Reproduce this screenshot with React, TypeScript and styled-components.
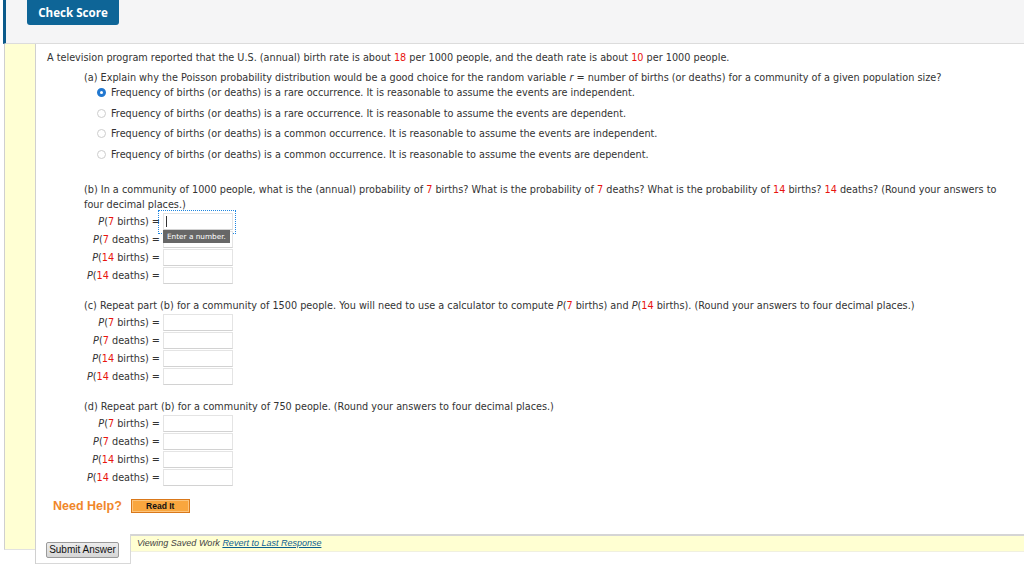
import React from "react";
import styled, { createGlobalStyle } from "styled-components";

const GlobalStyle = createGlobalStyle`
  html, body {
    margin: 0;
    padding: 0;
    background: #fff;
  }
  body {
    font-family: "DejaVu Sans", Verdana, sans-serif;
    font-size: 9.7px;
    color: #333;
  }
`;

const TopBar = styled.div`
  height: 43px;
  margin-left: 3px;
  padding-left: 21px;
  border-left: 3px solid #0b5a8a;
  border-bottom: 1px solid #dcdcdc;
  background: #f5f5f6;
`;

const CheckScore = styled.button`
  width: 92px;
  height: 25px;
  padding: 0;
  border: none;
  border-radius: 0 0 3px 3px;
  background: #0e6597;
  color: #fff;
  font-family: "Open Sans", sans-serif;
  font-weight: 700;
  font-size: 11.6px;
`;

const Main = styled.div`
  display: flex;
  margin-left: 4px;
`;

const NumberColumn = styled.div`
  width: 30px;
  margin-bottom: 14px;
  background: #ffffd3;
  border-left: 1px solid #cfcfcf;
  border-bottom: 1px solid #e2e2e2;
`;

const Content = styled.div`
  flex: 1;
  display: flex;
  flex-direction: column;
  border-left: 1px solid #d0d0d0;
`;

const Body = styled.div`
  padding: 6px 10px 0 11px;
  line-height: 15px;
`;

const Paragraph = styled.div`
  margin-bottom: 5px;
`;

const Part = styled.div`
  margin-left: 37px;
  margin-bottom: ${(p: { gap?: number }) => p.gap ?? 14}px;
`;

const Red = styled.span`
  color: #e8140f;
`;

const Options = styled.div`
  display: flex;
  flex-direction: column;
  gap: 5.5px;
  margin-left: 13px;
`;

const Option = styled.label`
  display: flex;
  align-items: center;
  gap: 5px;
`;

const Radio = styled.span<{ checked?: boolean }>`
  box-sizing: border-box;
  width: 9px;
  height: 9px;
  border-radius: 50%;
  background: #fff;
  border: ${(p) => (p.checked ? "3px solid #2278d0" : "1px solid #cdcdcd")};
`;

const AnswerGrid = styled.div`
  display: grid;
  grid-template-columns: 76px 70px;
  column-gap: 3px;
  row-gap: 1px;
  margin-top: 1px;
  align-items: center;
`;

const Label = styled.span`
  text-align: right;
  white-space: nowrap;
`;

const InputBox = styled.div`
  position: relative;
  box-sizing: border-box;
  width: 70px;
  height: 17px;
  background: #fff;
  border: 1px solid #e4e4e4;
  border-bottom-color: #d2d2d2;
`;

const FocusRing = styled.span`
  position: absolute;
  top: -4px;
  left: -6px;
  right: -4px;
  bottom: -5px;
  border: 1px dotted #1f86e0;
  pointer-events: none;
`;

const Caret = styled.span`
  position: absolute;
  left: 2px;
  top: 2px;
  width: 1px;
  height: 11px;
  background: #333;
`;

const Tooltip = styled.span`
  position: absolute;
  top: 16px;
  left: -1px;
  z-index: 2;
  padding: 0 4px;
  height: 13px;
  line-height: 13px;
  background: #676767;
  color: #fff;
  font-size: 7.3px;
  white-space: nowrap;
`;

const HelpRow = styled.div`
  display: flex;
  align-items: center;
  gap: 9px;
  margin: 13px 0 0 6px;
`;

const NeedHelp = styled.span`
  font-family: "Liberation Sans", Arial, sans-serif;
  font-weight: 700;
  font-size: 12.5px;
  color: #f0872a;
`;

const ReadIt = styled.button`
  width: 59px;
  height: 14px;
  padding: 0;
  background: #f9a63e;
  border: 1px solid #d9781a;
  box-shadow: inset 0 0 0 1px #fcc47c;
  font-family: "Liberation Sans", Arial, sans-serif;
  font-weight: 700;
  font-size: 8.5px;
  color: #111;
`;

const Footer = styled.div`
  display: flex;
  align-items: flex-start;
  margin-top: 20px;
`;

const SubmitCell = styled.div`
  box-sizing: border-box;
  width: 95px;
  height: 30px;
  padding: 8px 0 0 10px;
  border-right: 1px solid #d8d8d8;
  border-bottom: 1px solid #d8d8d8;
`;

const SubmitButton = styled.button`
  width: 73px;
  height: 16px;
  padding: 0;
  border: 1px solid #9a9a9a;
  border-radius: 2px;
  background: linear-gradient(#ececec, #d6d6d6);
  font-family: "Liberation Sans", Arial, sans-serif;
  font-size: 10px;
  color: #111;
`;

const SavedBar = styled.div`
  flex: 1;
  height: 15px;
  padding-left: 6px;
  line-height: 15px;
  background: #ffffd2;
  border-top: 2px solid #d5d5d5;
  border-bottom: 1px solid #f0f0e0;
  font-family: "Liberation Sans", Arial, sans-serif;
  font-style: italic;
  font-size: 9px;
  color: #444;
`;

const RevertLink = styled.a`
  color: #0b5e91;
  text-decoration: underline;
`;

type Row = { n: string; kind: string };

const rows: Row[] = [
  { n: "7", kind: "births" },
  { n: "7", kind: "deaths" },
  { n: "14", kind: "births" },
  { n: "14", kind: "deaths" },
];

const options = [
  "Frequency of births (or deaths) is a rare occurrence. It is reasonable to assume the events are independent.",
  "Frequency of births (or deaths) is a rare occurrence. It is reasonable to assume the events are dependent.",
  "Frequency of births (or deaths) is a common occurrence. It is reasonable to assume the events are independent.",
  "Frequency of births (or deaths) is a common occurrence. It is reasonable to assume the events are dependent.",
];

function Answers({ focused }: { focused?: boolean }) {
  return (
    <AnswerGrid>
      {rows.map((r, i) => (
        <React.Fragment key={r.n + r.kind}>
          <Label>
            <i>P</i>(<Red>{r.n}</Red> {r.kind}) =
          </Label>
          <InputBox>
            {focused && i === 0 && (
              <>
                <FocusRing />
                <Caret />
                <Tooltip>Enter a number.</Tooltip>
              </>
            )}
          </InputBox>
        </React.Fragment>
      ))}
    </AnswerGrid>
  );
}

export default function App() {
  return (
    <>
      <GlobalStyle />
      <TopBar>
        <CheckScore>Check Score</CheckScore>
      </TopBar>
      <Main>
        <NumberColumn />
        <Content>
          <Body>
            <Paragraph>
              A television program reported that the U.S. (annual) birth rate is about <Red>18</Red> per 1000
              people, and the death rate is about <Red>10</Red> per 1000 people.
            </Paragraph>
            <Part gap={20}>
              <div>
                (a) Explain why the Poisson probability distribution would be a good choice for the random
                variable <i>r</i> = number of births (or deaths) for a community of a given population size?
              </div>
              <Options>
                {options.map((o, i) => (
                  <Option key={o}>
                    <Radio checked={i === 0} />
                    {o}
                  </Option>
                ))}
              </Options>
            </Part>
            <Part>
              <div>
                (b) In a community of 1000 people, what is the (annual) probability of <Red>7</Red> births? What
                is the probability of <Red>7</Red> deaths? What is the probability of <Red>14</Red> births?{" "}
                <Red>14</Red>
                {" deaths? (Round your answers to "}
                {"four decimal places.)"}
              </div>
              <Answers focused />
            </Part>
            <Part>
              <div>
                (c) Repeat part (b) for a community of 1500 people. You will need to use a calculator to compute{" "}
                <i>P</i>(<Red>7</Red> births) and <i>P</i>(<Red>14</Red> births). (Round your answers to four
                decimal places.)
              </div>
              <Answers />
            </Part>
            <Part gap={0}>
              <div>(d) Repeat part (b) for a community of 750 people. (Round your answers to four decimal places.)</div>
              <Answers />
            </Part>
            <HelpRow>
              <NeedHelp>Need Help?</NeedHelp>
              <ReadIt>Read It</ReadIt>
            </HelpRow>
          </Body>
          <Footer>
            <SubmitCell>
              <SubmitButton>Submit Answer</SubmitButton>
            </SubmitCell>
            <SavedBar>
              Viewing Saved Work <RevertLink href="#">Revert to Last Response</RevertLink>
            </SavedBar>
          </Footer>
        </Content>
      </Main>
    </>
  );
}
